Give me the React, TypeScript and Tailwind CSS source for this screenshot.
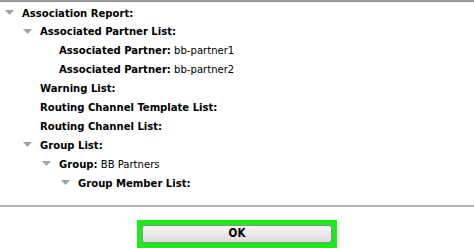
import React from 'react';

type Row = { level: number; open?: boolean; label: string; value?: string };

const rows: Row[] = [
  { level: 0, open: true, label: 'Association Report:' },
  { level: 1, open: true, label: 'Associated Partner List:' },
  { level: 2, label: 'Associated Partner:', value: 'bb-partner1' },
  { level: 2, label: 'Associated Partner:', value: 'bb-partner2' },
  { level: 1, label: 'Warning List:' },
  { level: 1, label: 'Routing Channel Template List:' },
  { level: 1, label: 'Routing Channel List:' },
  { level: 1, open: true, label: 'Group List:' },
  { level: 2, open: true, label: 'Group:', value: 'BB Partners' },
  { level: 3, open: true, label: 'Group Member List:' },
];

// left padding per tree level, caret (9px) + gap (8px) puts the text at 22 / 40 / 59 / 78
const indents = ['pl-[5px]', 'pl-[23px]', 'pl-[42px]', 'pl-[61px]'];

const Caret = () => (
  <svg width="9" height="5" viewBox="0 0 9 5" className="shrink-0 mb-[3px]">
    <path d="M0 0 L9 0 L4.5 5 Z" fill="#a0a0a0" />
  </svg>
);

export default function App() {
  return (
    <div className="w-[474px] h-[248px] bg-white overflow-hidden flex flex-col font-['DejaVu_Sans',Verdana,sans-serif] [font-stretch:condensed] text-[11.2px] text-black">
      <div className="h-[2px] bg-[#9a9a9a] shrink-0" />
      <div className="h-[205px] shrink-0 border-b-2 border-[#b4b4b4] pt-[2.5px]">
        {rows.map((r, i) => (
          <div key={i} className={`h-[18.9px] flex items-center gap-[8px] ${indents[r.level]}`}>
            {r.open ? <Caret /> : <span className="w-[9px] shrink-0" />}
            <span className="whitespace-nowrap">
              <span className="font-bold">{r.label}</span>
              {r.value && <span> {r.value}</span>}
            </span>
          </div>
        ))}
      </div>
      <div className="flex justify-center pt-[13px]">
        <div className="w-[200px] h-[28px] bg-[#1ee81e] px-[5px] pt-[5px]">
          <button className="w-full h-[18px] flex items-center justify-center rounded-[3px] border border-[#8f8f8f] bg-gradient-to-b from-[#f8f8f8] to-[#dadada] text-[11.5px] font-bold leading-none">
            OK
          </button>
        </div>
      </div>
    </div>
  );
}
